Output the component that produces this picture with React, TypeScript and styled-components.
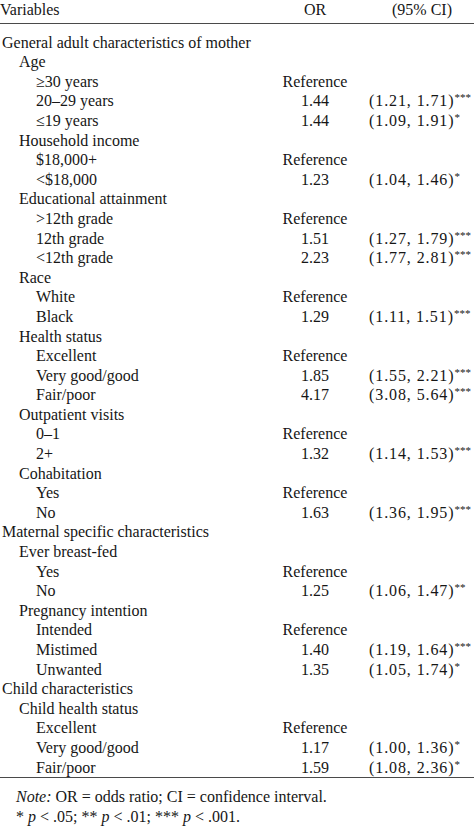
import React, { FC } from 'react'
import styled, { createGlobalStyle } from 'styled-components'

const GlobalStyle = createGlobalStyle`
    html, body {
        margin: 0;
        padding: 0;
        background: #ffffff;
    }
    body {
        font-family: "Liberation Serif", "Times New Roman", serif;
        font-size: 16px;
        color: #161616;
    }
`

const Table = styled.div`
    width: 474px;
    display: flex;
    flex-direction: column;
`

const Grid = styled.div`
    display: grid;
    grid-template-columns: 280px 70px 1fr;
    align-items: center;
    line-height: 19.6px;
    height: 19.6px;
    white-space: nowrap;
`

const Header = styled(Grid)`
    padding-bottom: 3px;
    border-bottom: 1.5px solid #4a4a4a;
`

const Body = styled.div`
    display: flex;
    flex-direction: column;
    padding: 9px 0 0;
    border-bottom: 1.5px solid #4a4a4a;
`

const Label = styled.div<{ $level: number }>`
    padding-left: ${p => 2 + p.$level * 17}px;
`

const HeadLabel = styled.div`
    padding-left: 0;
`

const Odds = styled.div`
    text-align: center;
`

const Interval = styled.div`
    padding-left: 19px;
    letter-spacing: 0.9px;
`

const HeadInterval = styled.div`
    padding-left: 20px;
    text-align: center;
`

const Stars = styled.span`
    font-size: 11px;
    letter-spacing: 0;
    vertical-align: 5px;
    line-height: 0;
`

const Notes = styled.div`
    display: flex;
    flex-direction: column;
    padding: 9px 0 0 16px;
    line-height: 19.6px;
`

const Em = styled.i`
    font-style: italic;
`

type Row = [number, string, string?, string?, string?]

const rows: Row[] = [
    [0, 'General adult characteristics of mother'],
    [1, 'Age'],
    [2, '≥30 years', 'Reference'],
    [2, '20–29 years', '1.44', '(1.21, 1.71)', '***'],
    [2, '≤19 years', '1.44', '(1.09, 1.91)', '*'],
    [1, 'Household income'],
    [2, '$18,000+', 'Reference'],
    [2, '<$18,000', '1.23', '(1.04, 1.46)', '*'],
    [1, 'Educational attainment'],
    [2, '>12th grade', 'Reference'],
    [2, '12th grade', '1.51', '(1.27, 1.79)', '***'],
    [2, '<12th grade', '2.23', '(1.77, 2.81)', '***'],
    [1, 'Race'],
    [2, 'White', 'Reference'],
    [2, 'Black', '1.29', '(1.11, 1.51)', '***'],
    [1, 'Health status'],
    [2, 'Excellent', 'Reference'],
    [2, 'Very good/good', '1.85', '(1.55, 2.21)', '***'],
    [2, 'Fair/poor', '4.17', '(3.08, 5.64)', '***'],
    [1, 'Outpatient visits'],
    [2, '0–1', 'Reference'],
    [2, '2+', '1.32', '(1.14, 1.53)', '***'],
    [1, 'Cohabitation'],
    [2, 'Yes', 'Reference'],
    [2, 'No', '1.63', '(1.36, 1.95)', '***'],
    [0, 'Maternal specific characteristics'],
    [1, 'Ever breast-fed'],
    [2, 'Yes', 'Reference'],
    [2, 'No', '1.25', '(1.06, 1.47)', '**'],
    [1, 'Pregnancy intention'],
    [2, 'Intended', 'Reference'],
    [2, 'Mistimed', '1.40', '(1.19, 1.64)', '***'],
    [2, 'Unwanted', '1.35', '(1.05, 1.74)', '*'],
    [0, 'Child characteristics'],
    [1, 'Child health status'],
    [2, 'Excellent', 'Reference'],
    [2, 'Very good/good', '1.17', '(1.00, 1.36)', '*'],
    [2, 'Fair/poor', '1.59', '(1.08, 2.36)', '*'],
]

const App: FC = () => {
    return (
        <Table>
            <GlobalStyle />
            <Header>
                <HeadLabel>Variables</HeadLabel>
                <Odds>OR</Odds>
                <HeadInterval>(95% CI)</HeadInterval>
            </Header>
            <Body>
                {rows.map(([level, label, or, ci, stars], i) => (
                    <Grid key={i}>
                        <Label $level={level}>{label}</Label>
                        <Odds>{or}</Odds>
                        <Interval>
                            {ci}
                            {stars && <Stars>{stars}</Stars>}
                        </Interval>
                    </Grid>
                ))}
            </Body>
            <Notes>
                <div>
                    <Em>Note:</Em> OR = odds ratio; CI = confidence interval.
                </div>
                <div>
                    * <Em>p</Em> &lt; .05; ** <Em>p</Em> &lt; .01; *** <Em>p</Em> &lt; .001.
                </div>
            </Notes>
        </Table>
    )
}

export default App
